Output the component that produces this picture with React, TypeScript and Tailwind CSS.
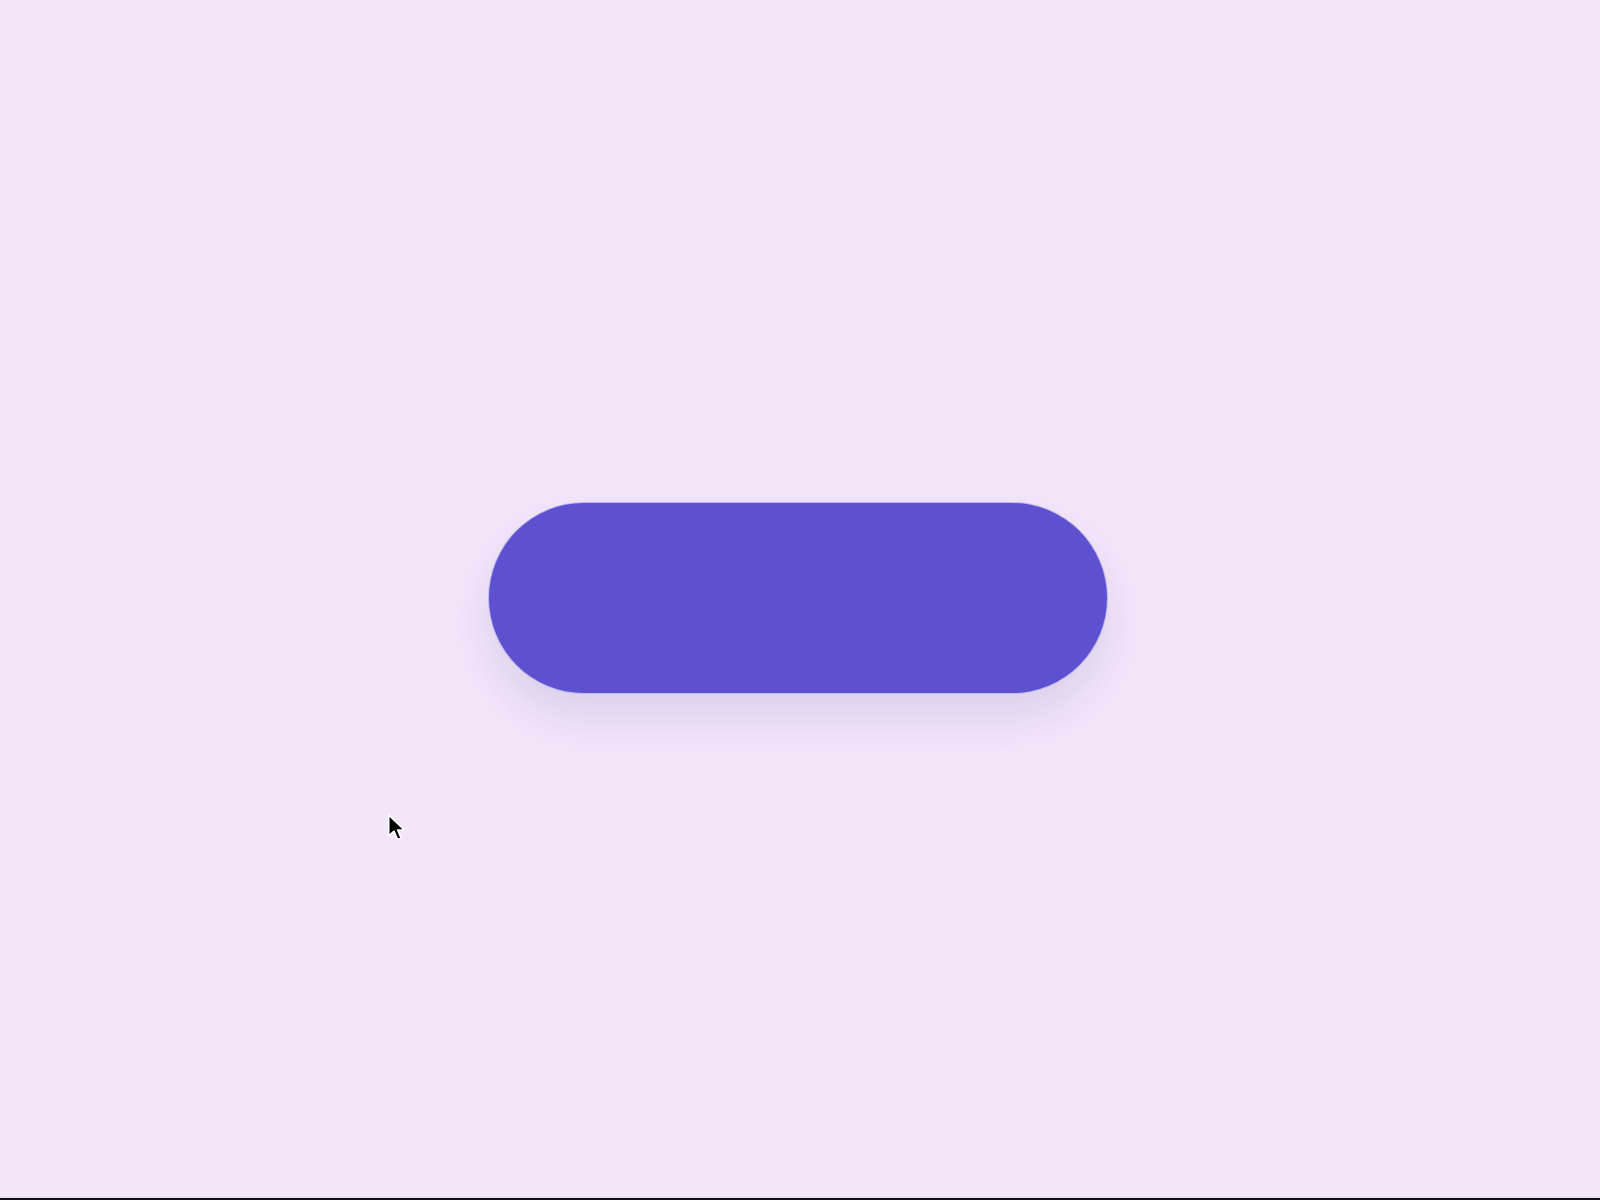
export default function App() {
  return (
    <div className="relative flex h-[1200px] w-full flex-col bg-[#f3e6f9]">
      <div className="flex flex-1 items-center justify-center pb-[2px] pr-[4px]">
        <button
          type="button"
          className="h-[192px] w-[620px] rounded-full border border-white/60 bg-[#5e51cf] shadow-[0_24px_44px_rgba(70,70,150,0.13)]"
        />
      </div>

      {/* mouse pointer */}
      <svg
        className="pointer-events-none absolute left-[387px] top-[814px]"
        width="22"
        height="30"
        viewBox="0 0 18 26"
      >
        <path
          d="M1 1 L1 19 L5.5 14.8 L8.6 22 L11.6 20.7 L8.6 13.8 L14.5 13.8 Z"
          fill="#000"
          stroke="#fff"
          strokeWidth="1.3"
          strokeLinejoin="round"
        />
      </svg>

      <div className="h-px w-full bg-[#e4dcea]" />
      <div className="h-[2px] w-full bg-[#111]" />
    </div>
  );
}
